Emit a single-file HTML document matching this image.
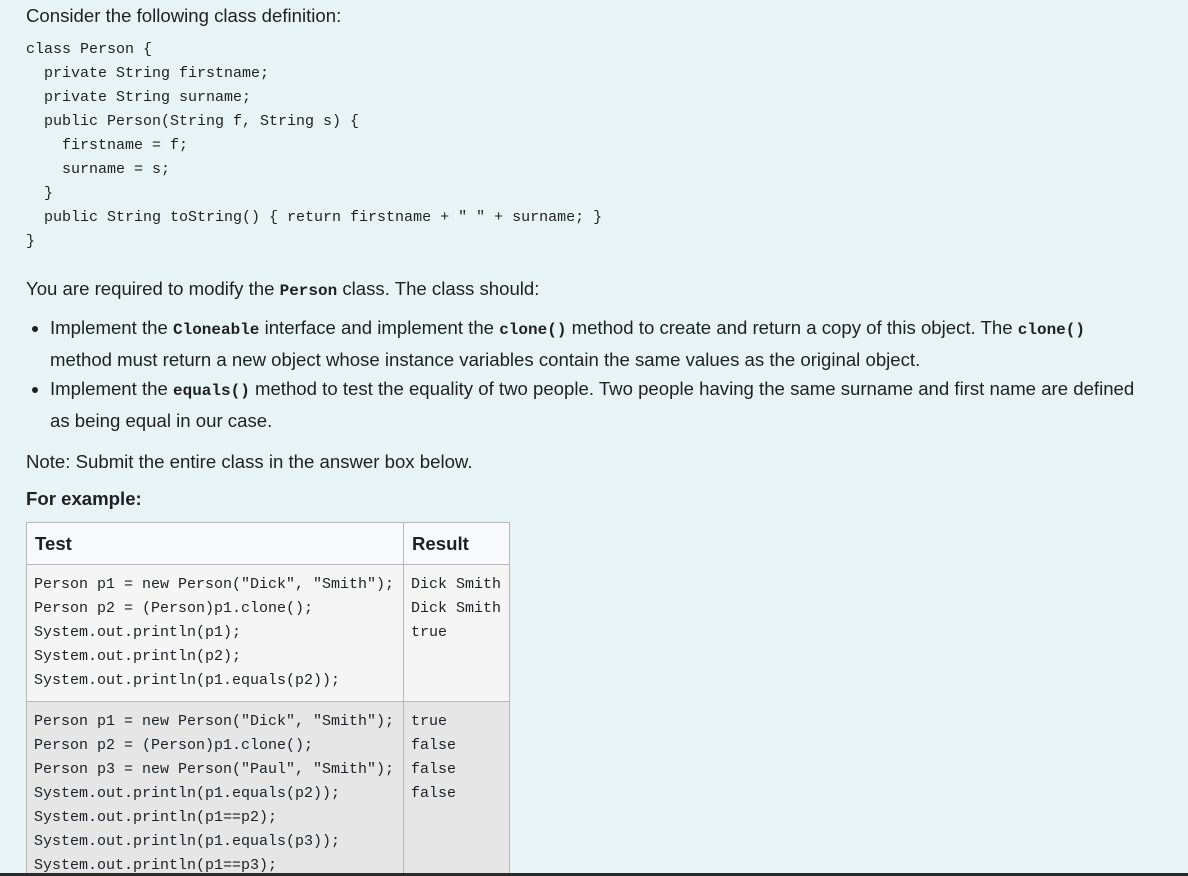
<!DOCTYPE html>
<html><head><style>
html,body{margin:0;width:1188px;height:876px;overflow:hidden}
body{background:#e7f3f5;font-family:"Liberation Sans",sans-serif;color:#1d2125;position:relative}
.t{position:absolute;left:26px;font-size:18.6px;white-space:nowrap}
pre{margin:0;position:absolute;left:26px;top:38px;font-family:"Liberation Mono",monospace;font-size:15px;line-height:24px;color:#1d2125}
code{font-family:"Liberation Mono",monospace;font-size:16px;font-weight:bold}
ul{position:absolute;left:26px;top:313px;margin:0;padding-left:24px;width:1092px;font-size:18.6px;line-height:29px}
li{margin:0;}
table{position:absolute;left:26px;top:522px;border-collapse:collapse}
td,th{border:1px solid #b8b8b8;vertical-align:top;text-align:left}
th{background:#f8f9fc;height:41px;font-size:18.6px;padding:0 8px;font-weight:bold;vertical-align:middle}
td{font-family:"Liberation Mono",monospace;font-size:15px;line-height:24px;padding:8px 7px 8px 7px;white-space:pre}
.r1 td{background:#f5f5f5}
.r2 td{background:#e6e6e6}
.bar{position:absolute;left:0;top:873px;width:1188px;height:3px;background:#2b2b2b}
</style></head><body>
<div class="t" style="top:5px">Consider the following class definition:</div>
<pre>class Person {
  private String firstname;
  private String surname;
  public Person(String f, String s) {
    firstname = f;
    surname = s;
  }
  public String toString() { return firstname + " " + surname; }
}</pre>
<div class="t" style="top:278px">You are required to modify the <code>Person</code> class. The class should:</div>
<ul>
<li>Implement the <code>Cloneable</code> interface and implement the <code>clone()</code> method to create and return a copy of this object. The <code>clone()</code> method must return a new object whose instance variables contain the same values as the original object.</li>
<li>Implement the <code>equals()</code> method to test the equality of two people. Two people having the same surname and first name are defined as being equal in our case.</li>
</ul>
<div class="t" style="top:451px">Note: Submit the entire class in the answer box below.</div>
<div class="t" style="top:488px;font-weight:bold">For example:</div>
<table>
<tr><th style="width:360px">Test</th><th style="width:89px">Result</th></tr>
<tr class="r1"><td style="height:120px">Person p1 = new Person("Dick", "Smith");
Person p2 = (Person)p1.clone();
System.out.println(p1);
System.out.println(p2);
System.out.println(p1.equals(p2));</td><td>Dick Smith
Dick Smith
true</td></tr>
<tr class="r2"><td style="height:180px">Person p1 = new Person("Dick", "Smith");
Person p2 = (Person)p1.clone();
Person p3 = new Person("Paul", "Smith");
System.out.println(p1.equals(p2));
System.out.println(p1==p2);
System.out.println(p1.equals(p3));
System.out.println(p1==p3);</td><td>true
false
false
false</td></tr>
</table>
<div class="bar"></div>
</body></html>
